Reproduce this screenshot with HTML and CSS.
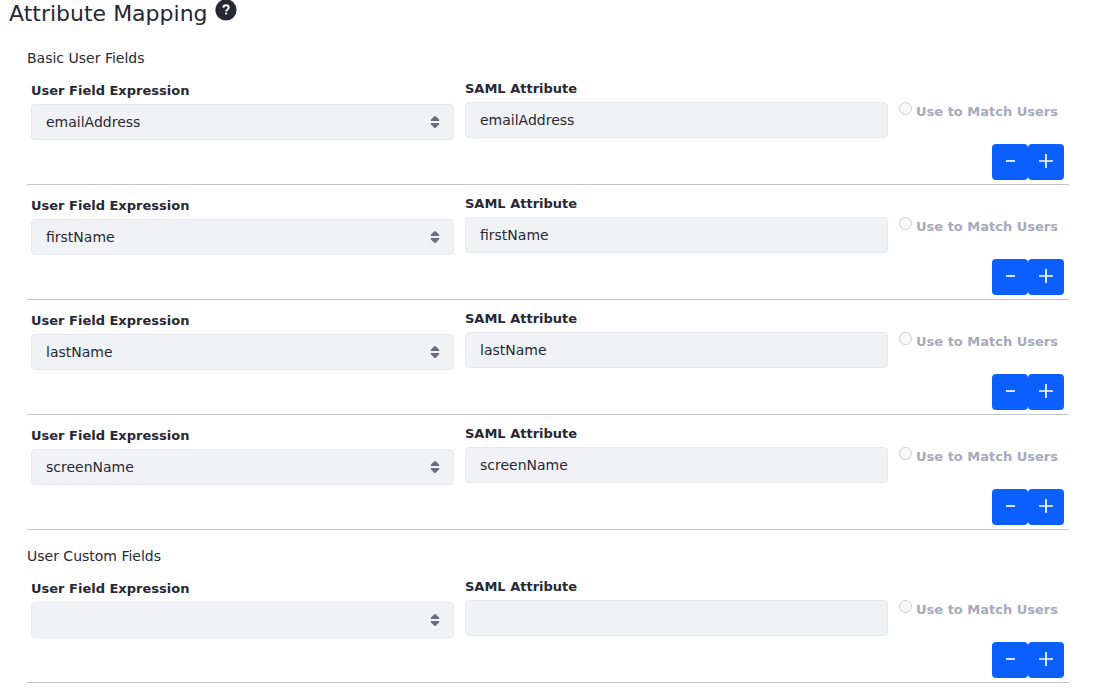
FILE: index.html
```html
<!DOCTYPE html>
<html lang="en">
<head>
  <meta charset="UTF-8">
  <title>Attribute Mapping</title>
  <link rel="stylesheet" href="styles.css">
</head>
<body>

  <form class="mapping">
    <h3 class="mapping-title">
      Attribute Mapping
      <svg class="help-icon" viewBox="0 0 22 21" role="img" aria-label="Help">
        <circle cx="11" cy="9.9" r="10.6" fill="#272833"/>
        <path d="M8.4 7.6C8.5 6.1 9.5 5.3 11 5.300s2.700.9 2.700 2.300c0 1.100-.7 1.700-1.400 2.200-.8.5-1.200.9-1.200 1.700" fill="none" stroke="#fff" stroke-width="1.9"/>
        <circle cx="11.1" cy="13.6" r="1.1" fill="#fff"/>
      </svg>
    </h3>

    <section class="field-group">
      <h4 class="group-title">Basic User Fields</h4>

      <div class="field-row">
        <div class="fields">
          <div class="field field-select">
            <label for="field1">User Field Expression</label>
            <select id="field1" class="control"><option>emailAddress</option></select>
          </div>
          <div class="field">
            <label for="saml1">SAML Attribute</label>
            <input id="saml1" class="control" type="text" value="emailAddress">
          </div>
          <label class="match"><input type="radio" name="match" disabled><span>Use to Match Users</span></label>
        </div>
        <div class="row-buttons">
          <button type="button" aria-label="Remove"><svg viewBox="0 0 16 16"><path d="M4 7h9"/></svg></button>
          <button type="button" aria-label="Add"><svg viewBox="0 0 16 16"><path d="M1 7h14M8 0v14"/></svg></button>
        </div>
      </div>

      <div class="field-row">
        <div class="fields">
          <div class="field field-select">
            <label for="field2">User Field Expression</label>
            <select id="field2" class="control"><option>firstName</option></select>
          </div>
          <div class="field">
            <label for="saml2">SAML Attribute</label>
            <input id="saml2" class="control" type="text" value="firstName">
          </div>
          <label class="match"><input type="radio" name="match" disabled><span>Use to Match Users</span></label>
        </div>
        <div class="row-buttons">
          <button type="button" aria-label="Remove"><svg viewBox="0 0 16 16"><path d="M4 7h9"/></svg></button>
          <button type="button" aria-label="Add"><svg viewBox="0 0 16 16"><path d="M1 7h14M8 0v14"/></svg></button>
        </div>
      </div>

      <div class="field-row">
        <div class="fields">
          <div class="field field-select">
            <label for="field3">User Field Expression</label>
            <select id="field3" class="control"><option>lastName</option></select>
          </div>
          <div class="field">
            <label for="saml3">SAML Attribute</label>
            <input id="saml3" class="control" type="text" value="lastName">
          </div>
          <label class="match"><input type="radio" name="match" disabled><span>Use to Match Users</span></label>
        </div>
        <div class="row-buttons">
          <button type="button" aria-label="Remove"><svg viewBox="0 0 16 16"><path d="M4 7h9"/></svg></button>
          <button type="button" aria-label="Add"><svg viewBox="0 0 16 16"><path d="M1 7h14M8 0v14"/></svg></button>
        </div>
      </div>

      <div class="field-row">
        <div class="fields">
          <div class="field field-select">
            <label for="field4">User Field Expression</label>
            <select id="field4" class="control"><option>screenName</option></select>
          </div>
          <div class="field">
            <label for="saml4">SAML Attribute</label>
            <input id="saml4" class="control" type="text" value="screenName">
          </div>
          <label class="match"><input type="radio" name="match" disabled><span>Use to Match Users</span></label>
        </div>
        <div class="row-buttons">
          <button type="button" aria-label="Remove"><svg viewBox="0 0 16 16"><path d="M4 7h9"/></svg></button>
          <button type="button" aria-label="Add"><svg viewBox="0 0 16 16"><path d="M1 7h14M8 0v14"/></svg></button>
        </div>
      </div>
    </section>

    <section class="field-group">
      <h4 class="group-title">User Custom Fields</h4>

      <div class="field-row">
        <div class="fields">
          <div class="field field-select">
            <label for="field5">User Field Expression</label>
            <select id="field5" class="control"><option></option></select>
          </div>
          <div class="field">
            <label for="saml5">SAML Attribute</label>
            <input id="saml5" class="control" type="text">
          </div>
          <label class="match"><input type="radio" name="match-custom" disabled><span>Use to Match Users</span></label>
        </div>
        <div class="row-buttons">
          <button type="button" aria-label="Remove"><svg viewBox="0 0 16 16"><path d="M4 7h9"/></svg></button>
          <button type="button" aria-label="Add"><svg viewBox="0 0 16 16"><path d="M1 7h14M8 0v14"/></svg></button>
        </div>
      </div>
    </section>
  </form>

</body>
</html>
```

FILE: styles.css
```css
* {
  box-sizing: border-box;
}

body {
  margin: 0;
  background-color: #fff;
  color: #272833;
  font-family: "DejaVu Sans", sans-serif;
  font-size: 14px;
}

.mapping {
  padding: 0 39px 0 27px;
}

.mapping-title {
  display: flex;
  align-items: flex-start;
  gap: 7px;
  margin: 0 0 0 -18px;
  font-size: 22px;
  font-weight: normal;
  line-height: 27px;
}

.help-icon {
  width: 22px;
  height: 21px;
}

.group-title {
  margin: 0;
  padding: 18px 0 3px;
  font-size: 14px;
  font-weight: normal;
  line-height: 17px;
}

.mapping-title + .field-group {
  padding-top: 5px;
}

.field-row {
  padding: 10px 5px 4px 4px;
  border-bottom: 1px solid #c6c6c8;
}

.fields {
  display: grid;
  grid-template-columns: 1fr 1fr 165px;
  gap: 11px;
}

.field {
  display: flex;
  flex-direction: column;
  gap: 5px;
  min-width: 0;
}

.field-select {
  padding-top: 2px;
}

.field label,
.match {
  font-size: 13px;
  font-weight: bold;
  line-height: 17px;
}

.control {
  width: 100%;
  height: 36px;
  padding: 0 14px;
  border: 1px solid #e7e7ed;
  border-radius: 4px;
  background-color: #f1f2f5;
  color: #272833;
  font-family: inherit;
  font-size: 14px;
}

select.control {
  appearance: none;
  background-image: url("data:image/svg+xml,%3Csvg xmlns='http://www.w3.org/2000/svg' viewBox='0 0 10 14'%3E%3Cpath d='M1.200 6Q.2 5.400 1 4.500L4 1.400Q5 .4 6 1.400L9 4.500Q9.800 5.400 8.800 6zM1.200 8h7.600Q9.800 8.600 9 9.500L6 12.600Q5 13.600 4 12.600L1 9.500Q.2 8.600 1.200 8z' fill='%236b6c7e'/%3E%3C/svg%3E");
  background-repeat: no-repeat;
  background-position: right 13px center;
  background-size: 10px 14px;
}

.match {
  display: flex;
  align-items: flex-start;
  gap: 4px;
  padding-top: 22px;
  color: #a7a9bc;
  white-space: nowrap;
}

.match input {
  width: 13px;
  height: 13px;
  margin: 0;
}

.match span {
  padding-top: 1px;
}

.row-buttons {
  display: flex;
  justify-content: flex-end;
  margin-top: 4px;
}

.row-buttons button {
  display: flex;
  align-items: center;
  justify-content: center;
  width: 36px;
  height: 36px;
  padding: 0;
  border: none;
  border-radius: 4px;
  background-color: #0b5fff;
  cursor: pointer;
}

.row-buttons svg {
  width: 16px;
  height: 16px;
  fill: none;
  stroke: #fff;
  stroke-width: 1.7;
}
```
